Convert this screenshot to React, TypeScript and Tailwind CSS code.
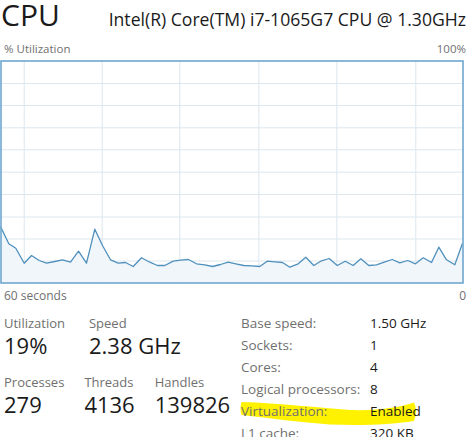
import React from 'react';

const points: [number, number][] = [
  [4, 226], [12.3, 243.3], [19.3, 247.7], [27.7, 262.7], [35, 255], [42.7, 260], [50, 262.7],
  [58.3, 261], [66, 259.3], [74, 261.7], [82, 250.7], [90, 262.7], [98.3, 228.7], [106, 245],
  [114, 259.3], [121.7, 262.7], [129, 262], [136.7, 266], [145, 257.3], [153.3, 261.7], [161, 265],
  [168.3, 265], [176.7, 260.7], [184.3, 259.7], [192, 259], [200, 263.3], [208.3, 264.3], [216, 266],
  [224, 264], [231.7, 261.7], [239.3, 263.3], [247.3, 265], [255.3, 265.3], [263.3, 266], [270.7, 260.7],
  [278.7, 261.3], [286, 262], [293.3, 266.7], [301.7, 263.3], [309.3, 256.7], [317.3, 265], [325, 260.3],
  [332.7, 258], [340.7, 265], [348.7, 260.7], [356.7, 265], [364.3, 258.3], [372.3, 265], [380, 264.3],
  [387.7, 261.7], [395.7, 259], [403.3, 262.3], [411.3, 260], [419, 263.3], [426.7, 257.3], [435, 262],
  [442.3, 246.7], [450, 259.3], [458.3, 264.3], [466, 242.7],
];

const vLines = [27.7, 105.7, 183.3, 262.3, 340.3, 419.3];
const hLines = [83, 105, 127.3, 149.3, 171.7, 194, 216.5, 238.5, 260.5];

const details: [string, string][] = [
  ['Base speed:', '1.50 GHz'],
  ['Sockets:', '1'],
  ['Cores:', '4'],
  ['Logical processors:', '8'],
  ['Virtualization:', 'Enabled'],
  ['L1 cache:', '320 KB'],
];

function Graph() {
  const line = points.map(p => p.join(',')).join(' ');
  const area = `4,282 ${line} 466,282`;
  return (
    <svg width={464} height={224} viewBox="3.5 59.5 464 224" className="block">
      <rect x={4} y={60} width={463} height={223} fill="#ffffff" />
      {hLines.map(y => (
        <line key={y} x1={4} x2={467} y1={y} y2={y} stroke="#dde7ee" strokeWidth={1} />
      ))}
      {vLines.map(x => (
        <line key={x} x1={x} x2={x} y1={60} y2={283} stroke="#dde7ee" strokeWidth={1} />
      ))}
      <polygon points={area} fill="#f1f6fa" />
      <polyline points={line} fill="none" stroke="#4f90bd" strokeWidth={1.3} strokeLinejoin="round" />
      <rect x={4.5} y={60.5} width={462} height={222} fill="none" stroke="#6ea7cf" strokeWidth={1.6} />
    </svg>
  );
}

function Stat({ label, value }: { label: string; value: string }) {
  return (
    <div>
      <div className="text-[13px] leading-[16px] text-[#707070]">{label}</div>
      <div className="text-[22px] leading-[28px]">{value}</div>
    </div>
  );
}

export default function App() {
  return (
    <div
      className="relative w-[474px] h-[437px] overflow-hidden bg-white text-[#1a1a1a]"
      style={{ fontFamily: '"Open Sans", "Noto Sans", sans-serif' }}
    >
      <header className="flex items-end justify-between pl-[1px] pr-[8px] h-[32px]">
        <span className="text-[30px] leading-[34px]">CPU</span>
        <span className="text-[17.6px] leading-none mb-[3px]">Intel(R) Core(TM) i7-1065G7 CPU @ 1.30GHz</span>
      </header>

      <div className="flex justify-between pl-[4px] pr-[8px] mt-[10px] text-[11.5px] leading-[14px] text-[#707070]">
        <span>% Utilization</span>
        <span>100%</span>
      </div>

      <div className="mt-[4px]">
        <Graph />
      </div>

      <div className="flex justify-between pl-[4px] pr-[8px] mt-[5px] text-[12px] leading-[14px] text-[#707070]">
        <span>60 seconds</span>
        <span>0</span>
      </div>

      <div className="flex mt-[12px]">
        <div className="w-[237px] pl-[4px]">
          <div className="flex gap-[24px]">
            <Stat label="Utilization" value="19%" />
            <Stat label="Speed" value="2.38 GHz" />
          </div>
          <div className="flex gap-[20px] mt-[15px]">
            <Stat label="Processes" value="279" />
            <Stat label="Threads" value="4136" />
            <Stat label="Handles" value="139826" />
          </div>
        </div>

        <div className="relative pl-[4px] -mt-[3px]">
          <svg
            className="absolute left-[3px] top-[89px]"
            width={178}
            height={25}
            viewBox="0 0 178 25"
          >
            <path
              d="M1.5 1 C 40 2, 80 7, 110 9 C 140 10, 160 6, 174 1.5 Q 178 9, 174 20 C 150 24, 120 24.5, 90 23.5 C 60 21.5, 30 17, 1.5 14 Q -0.5 8, 1.5 1 Z"
              fill="#fff200"
            />
          </svg>
          {details.map(([k, v]) => (
            <div key={k} className="relative flex text-[13.5px] leading-[22px]">
              <span className="w-[129px] text-[#707070]">{k}</span>
              <span>{v}</span>
            </div>
          ))}
        </div>
      </div>
    </div>
  );
}
